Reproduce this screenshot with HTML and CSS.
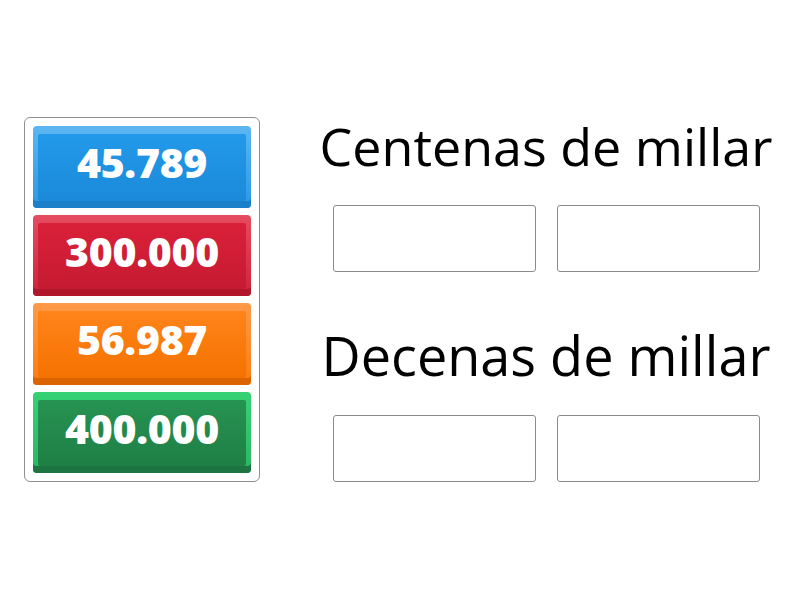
FILE: index.html
```html
<!DOCTYPE html>
<html lang="es">
<head>
    <meta charset="UTF-8">
    <meta name="viewport" content="width=device-width, initial-scale=1.0">
    <title>Relacionar</title>
    <link rel="stylesheet" href="styles.css">
</head>
<body>
    <div class="activity">
        <div class="tile-box">
            <div class="tile blue"><span class="tile-face">45.789</span></div>
            <div class="tile red"><span class="tile-face">300.000</span></div>
            <div class="tile orange"><span class="tile-face">56.987</span></div>
            <div class="tile green"><span class="tile-face">400.000</span></div>
        </div>

        <div class="targets">
            <div class="group">
                <h2 class="group-title">Centenas de millar</h2>
                <div class="slots">
                    <div class="slot"></div>
                    <div class="slot"></div>
                </div>
            </div>
            <div class="group">
                <h2 class="group-title wide">Decenas de millar</h2>
                <div class="slots">
                    <div class="slot"></div>
                    <div class="slot"></div>
                </div>
            </div>
        </div>
    </div>
</body>
</html>
```

FILE: styles.css
```css
body {
    margin: 0;
    background-color: #fff;
    font-family: "Open Sans", "Liberation Sans", sans-serif;
    color: #000;
}

.activity {
    display: flex;
    align-items: flex-start;
    gap: 56px;
    padding: 110px 0 0 24px;
}

/* left column with the draggable numbers */
.tile-box {
    margin-top: 7px;
    width: 236px;
    height: 365px;
    box-sizing: border-box;
    padding: 8px;
    border: 1px solid #8f8f8f;
    border-radius: 6px;
    display: flex;
    flex-direction: column;
    gap: 7px;
}

.tile {
    flex: 1;
    display: flex;
    border-radius: 4px;
    padding: 8px 5px 7px;
}

.tile-face {
    flex: 1;
    display: flex;
    align-items: center;
    justify-content: center;
    padding-bottom: 10px;
    border-radius: 2px;
    color: #fff;
    font-size: 41px;
    font-weight: 800;
    letter-spacing: -0.3px;
}

.blue {
    background: linear-gradient(#5cb6f1, #2a98e6);
    box-shadow: inset 0 -7px 0 #1b7fca;
}
.blue .tile-face {
    background: linear-gradient(#2399ea, #1b8ad9);
}

.red {
    background: linear-gradient(#e54c60, #cf2238);
    box-shadow: inset 0 -7px 0 #b0172b;
}
.red .tile-face {
    background: linear-gradient(#da2039, #c51b31);
}

.orange {
    background: linear-gradient(#ff9a48, #fb7c10);
    box-shadow: inset 0 -7px 0 #db6400;
}
.orange .tile-face {
    background: linear-gradient(#ff841a, #f47200);
}

.green {
    background: linear-gradient(#36d174, #29b862);
    box-shadow: inset 0 -7px 0 #1c7440;
}
.green .tile-face {
    background: linear-gradient(#269352, #1f7f45);
}

/* right side: categories and empty drop slots */
.targets {
    width: 460px;
    display: flex;
    flex-direction: column;
    gap: 48px;
}

.group {
    display: flex;
    flex-direction: column;
    align-items: center;
    gap: 24px;
}

.group-title {
    margin: 0;
    font-size: 52px;
    font-weight: 400;
    line-height: 71px;
    white-space: nowrap;
}

.group-title.wide {
    font-size: 54px;
}

.slots {
    display: flex;
    gap: 21px;
}

.slot {
    width: 203px;
    height: 67px;
    box-sizing: border-box;
    border: 1px solid #8a8a8a;
    border-radius: 3px;
    background-color: #fff;
}
```
